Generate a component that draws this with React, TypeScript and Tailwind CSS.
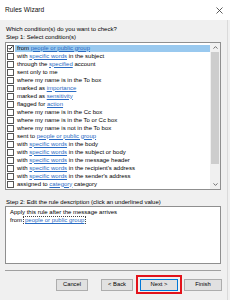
import React from "react";

type Seg = string | { l: string };

const rows: Seg[][] = [
  ["from ", { l: "people or public group" }],
  ["with ", { l: "specific words" }, " in the subject"],
  ["through the ", { l: "specified" }, " account"],
  ["sent only to me"],
  ["where my name is in the To box"],
  ["marked as ", { l: "importance" }],
  ["marked as ", { l: "sensitivity" }],
  ["flagged for ", { l: "action" }],
  ["where my name is in the Cc box"],
  ["where my name is in the To or Cc box"],
  ["where my name is not in the To box"],
  ["sent to ", { l: "people or public group" }],
  ["with ", { l: "specific words" }, " in the body"],
  ["with ", { l: "specific words" }, " in the subject or body"],
  ["with ", { l: "specific words" }, " in the message header"],
  ["with ", { l: "specific words" }, " in the recipient's address"],
  ["with ", { l: "specific words" }, " in the sender's address"],
  ["assigned to ", { l: "category" }, " category"],
];

function Segs({ segs }: { segs: Seg[] }) {
  return (
    <>
      {segs.map((s, i) =>
        typeof s === "string" ? (
          <span key={i} className="whitespace-pre">{s}</span>
        ) : (
          <span key={i} className="whitespace-pre text-[#2a6cc4] underline decoration-[0.5px] underline-offset-[1px]">
            {s.l}
          </span>
        )
      )}
    </>
  );
}

function Check({ on }: { on: boolean }) {
  return (
    <div className="w-[7px] h-[7px] border border-[#555] bg-white shrink-0 flex items-center justify-center">
      {on && (
        <svg width="6" height="6" viewBox="0 0 6 6">
          <path d="M0.8 3.1 L2.3 4.6 L5.3 1.2" stroke="#000" strokeWidth="1.1" fill="none" />
        </svg>
      )}
    </div>
  );
}

function Btn({ label, w, def }: { label: string; w: string; def?: boolean }) {
  return (
    <div
      className={`${w} h-[12px] flex items-center justify-center bg-[#e1e1e1] border ${
        def ? "border-[#0078d7]" : "border-[#adadad]"
      } text-[5.8px] leading-none`}
    >
      {label}
    </div>
  );
}

export default function App() {
  return (
    <div className="w-[230px] h-[300px] bg-[#f0f0f0] flex flex-col overflow-hidden font-['Liberation_Sans',Arial,sans-serif] text-[6px] text-black">
      <div className="h-[20px] bg-white flex items-center justify-between pl-[5px] pr-[7px] shrink-0">
        <span className="text-[6.6px] leading-none text-[#111]">Rules Wizard</span>
        <svg width="7" height="7" viewBox="0 0 7 7">
          <path d="M0.5 0.5 L6.5 6.5 M6.5 0.5 L0.5 6.5" stroke="#333" strokeWidth="0.8" />
        </svg>
      </div>
      <div className="flex-1 flex flex-col pl-[5px] mr-[2px] border-r border-[#dadada]">
        <div className="mt-[5px] h-[8px] leading-[8px] pl-[1px]">Which condition(s) do you want to check?</div>
        <div className="h-[8px] leading-[8px] pl-[1px]">Step 1: Select condition(s)</div>
        <div className="mt-[1px] w-[216px] h-[148px] bg-white border border-[#8f8f8f] flex">
          <div className="flex-1 flex flex-col py-[1px]">
            {rows.map((r, i) => (
              <div key={i} className="h-[8px] flex items-center">
                <div className="ml-[1px]">
                  <Check on={i === 0} />
                </div>
                <div
                  className={`ml-[1px] flex-1 h-[7px] flex items-center pl-[2px] leading-[7px] ${
                    i === 0 ? "bg-[#99c9ef]" : ""
                  }`}
                >
                  <Segs segs={r} />
                </div>
              </div>
            ))}
          </div>
          <div className="w-[10px] bg-[#f0f0f0] flex flex-col items-center">
            <div className="h-[9px] w-full flex items-center justify-center">
              <svg width="5" height="3" viewBox="0 0 5 3">
                <path d="M0.5 2.6 L2.5 0.6 L4.5 2.6" stroke="#606060" strokeWidth="0.9" fill="none" />
              </svg>
            </div>
            <div className="w-[8px] h-[112px] bg-[#cdcdcd]" />
            <div className="flex-1" />
            <div className="h-[9px] w-full flex items-center justify-center">
              <svg width="5" height="3" viewBox="0 0 5 3">
                <path d="M0.5 0.4 L2.5 2.4 L4.5 0.4" stroke="#606060" strokeWidth="0.9" fill="none" />
              </svg>
            </div>
          </div>
        </div>
        <div className="mt-[8px] h-[8px] leading-[8px] pl-[1px]">
          Step 2: Edit the rule description (click an underlined value)
        </div>
        <div className="w-[216px] h-[58px] bg-white border border-[#8f8f8f] pl-[4px] pt-[1px]">
          <div className="h-[8px] leading-[8px]">Apply this rule after the message arrives</div>
          <div className="h-[8px] leading-[8px] flex items-center">
            <span>from</span>
            <span className="ml-[1px] h-[8px] flex items-center border border-dotted border-[#444] px-[1px]">
              <Segs segs={[{ l: "people or public group" }]} />
            </span>
          </div>
        </div>
        <div className="mt-[6px] w-[216px] h-[1px] bg-[#a0a0a0]" />
        <div className="mt-[4px] flex items-center">
          <div className="ml-[51px]">
            <Btn label="Cancel" w="w-[32px]" />
          </div>
          <div className="ml-[13px]">
            <Btn label="< Back" w="w-[32px]" />
          </div>
          <div className="ml-[3px] border-2 border-[#e3131b] pl-[2px] pr-[2px] pt-[2px] pb-[1px]">
            <Btn label="Next >" w="w-[38px]" def />
          </div>
          <div className="ml-[2px]">
            <Btn label="Finish" w="w-[38px]" />
          </div>
        </div>
      </div>
    </div>
  );
}
